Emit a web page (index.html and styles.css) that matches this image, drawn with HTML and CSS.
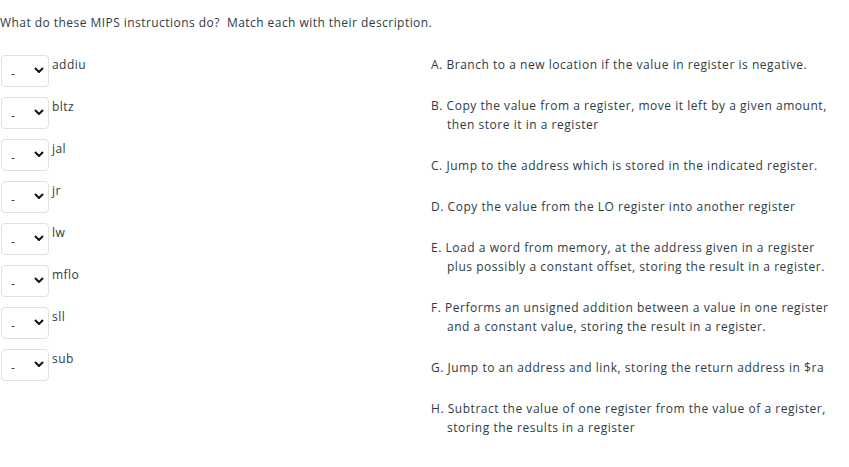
FILE: index.html
```html
<!DOCTYPE html>
<html>
<head>
<meta charset="utf-8">
<link rel="stylesheet" href="styles.css">
</head>
<body>
<div class="page">
  <p class="prompt">What do these MIPS instructions do?&nbsp; Match each with their description.</p>
  <div class="match">
    <div class="left">
      <div class="row"><div class="sel"><select><option>-</option></select><svg class="chev" width="10" height="6" viewBox="0 0 10 6"><path d="M1 1 L5 5 L9 1" fill="none" stroke="#111" stroke-width="2"/></svg></div><span class="term">addiu</span></div>
      <div class="row"><div class="sel"><select><option>-</option></select><svg class="chev" width="10" height="6" viewBox="0 0 10 6"><path d="M1 1 L5 5 L9 1" fill="none" stroke="#111" stroke-width="2"/></svg></div><span class="term">bltz</span></div>
      <div class="row"><div class="sel"><select><option>-</option></select><svg class="chev" width="10" height="6" viewBox="0 0 10 6"><path d="M1 1 L5 5 L9 1" fill="none" stroke="#111" stroke-width="2"/></svg></div><span class="term">jal</span></div>
      <div class="row"><div class="sel"><select><option>-</option></select><svg class="chev" width="10" height="6" viewBox="0 0 10 6"><path d="M1 1 L5 5 L9 1" fill="none" stroke="#111" stroke-width="2"/></svg></div><span class="term">jr</span></div>
      <div class="row"><div class="sel"><select><option>-</option></select><svg class="chev" width="10" height="6" viewBox="0 0 10 6"><path d="M1 1 L5 5 L9 1" fill="none" stroke="#111" stroke-width="2"/></svg></div><span class="term">lw</span></div>
      <div class="row"><div class="sel"><select><option>-</option></select><svg class="chev" width="10" height="6" viewBox="0 0 10 6"><path d="M1 1 L5 5 L9 1" fill="none" stroke="#111" stroke-width="2"/></svg></div><span class="term">mflo</span></div>
      <div class="row"><div class="sel"><select><option>-</option></select><svg class="chev" width="10" height="6" viewBox="0 0 10 6"><path d="M1 1 L5 5 L9 1" fill="none" stroke="#111" stroke-width="2"/></svg></div><span class="term">sll</span></div>
      <div class="row"><div class="sel"><select><option>-</option></select><svg class="chev" width="10" height="6" viewBox="0 0 10 6"><path d="M1 1 L5 5 L9 1" fill="none" stroke="#111" stroke-width="2"/></svg></div><span class="term">sub</span></div>
    </div>
    <div class="right">
      <div class="ans">A. Branch to a new location if the value in register is negative.</div>
      <div class="ans">B. Copy the value from a register, move it left by a given amount,<br>then store it in a register</div>
      <div class="ans">C. Jump to the address which is stored in the indicated register.</div>
      <div class="ans">D. Copy the value from the LO register into another register</div>
      <div class="ans">E. Load a word from memory, at the address given in a register<br>plus possibly a constant offset, storing the result in a register.</div>
      <div class="ans">F. Performs an unsigned addition between a value in one register<br>and a constant value, storing the result in a register.</div>
      <div class="ans">G. Jump to an address and link, storing the return address in $ra</div>
      <div class="ans">H. Subtract the value of one register from the value of a register,<br>storing the results in a register</div>
    </div>
  </div>
</div>
</body>
</html>
```
FILE: styles.css
```css
html, body {
  margin: 0;
  padding: 0;
  background: #ffffff;
}
body {
  font-family: "Open Sans", "Liberation Sans", sans-serif;
  font-size: 12px;
  line-height: 19px;
  letter-spacing: 0.45px;
  color: #2d3b45;
}
.page {
  padding-top: 13px;
}
.prompt {
  margin: 0 0 23px 0;
  white-space: nowrap;
}
.match {
  display: flex;
  align-items: flex-start;
}
.left {
  width: 431px;
  display: flex;
  flex-direction: column;
  gap: 10px;
}
.row {
  display: flex;
  align-items: flex-start;
  height: 32px;
}
.sel {
  position: relative;
  margin-left: 1px;
  width: 48px;
  height: 32px;
}
.sel select {
  appearance: none;
  -webkit-appearance: none;
  box-sizing: border-box;
  width: 48px;
  height: 32px;
  margin: 0;
  padding: 4px 0 0 9px;
  border: 1px solid #e1e1e1;
  border-radius: 4px;
  background: #ffffff;
  font-family: "Open Sans", "Liberation Sans", sans-serif;
  font-size: 12px;
  color: #2d3b45;
}
.chev {
  position: absolute;
  left: 33px;
  top: 12px;
  pointer-events: none;
}
.term {
  margin-left: 3px;
}
.right {
  padding-left: 16px;
  display: flex;
  flex-direction: column;
  gap: 22px;
  white-space: nowrap;
  letter-spacing: 0.53px;
}
.ans {
  text-indent: -16px;
}
```
